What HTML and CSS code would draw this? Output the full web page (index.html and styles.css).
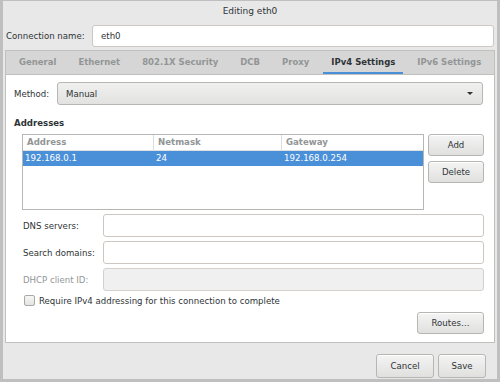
FILE: index.html
```html
<!DOCTYPE html>
<html>
<head>
<meta charset="utf-8">
<link rel="stylesheet" href="styles.css">
</head>
<body>
<div class="window">
  <div class="titlebar">Editing eth0</div>
  <div class="conn-row">
    <span class="conn-label">Connection name:</span>
    <div class="input conn-input">eth0</div>
  </div>
  <div class="notebook">
    <div class="tabs">
      <div class="tab">General</div>
      <div class="tab">Ethernet</div>
      <div class="tab">802.1X Security</div>
      <div class="tab">DCB</div>
      <div class="tab">Proxy</div>
      <div class="tab active">IPv4 Settings</div>
      <div class="tab">IPv6 Settings</div>
    </div>
    <div class="page">
      <div class="method-row">
        <span class="method-label">Method:</span>
        <div class="combo"><span>Manual</span><span class="arrow"></span></div>
      </div>
      <div class="section-title">Addresses</div>
      <div class="addr-row">
        <div class="table">
          <div class="thead">
            <div class="cell c1">Address</div>
            <div class="cell c2">Netmask</div>
            <div class="cell c3">Gateway</div>
          </div>
          <div class="trow selected">
            <div class="cell c1">192.168.0.1</div>
            <div class="cell c2">24</div>
            <div class="cell c3">192.168.0.254</div>
          </div>
        </div>
        <div class="addr-buttons">
          <div class="button">Add</div>
          <div class="button">Delete</div>
        </div>
      </div>
      <div class="fields">
        <span class="flabel">DNS servers:</span>
        <div class="input"></div>
        <span class="flabel">Search domains:</span>
        <div class="input"></div>
        <span class="flabel disabled">DHCP client ID:</span>
        <div class="input input-disabled"></div>
      </div>
      <div class="check-row">
        <span class="checkbox"></span>
        <span>Require IPv4 addressing for this connection to complete</span>
      </div>
      <div class="routes-row">
        <div class="button routes">Routes…</div>
      </div>
    </div>
  </div>
  <div class="actions">
    <div class="button act cancel">Cancel</div>
    <div class="button act save">Save</div>
  </div>
</div>
</body>
</html>
```

FILE: styles.css
```css
* { box-sizing: border-box; }
html, body { margin: 0; padding: 0; }
body {
  width: 500px;
  height: 382px;
  background: #bfbfbf;
  padding: 1px 3px 3px 3px;
  font-family: "DejaVu Sans", sans-serif;
  font-size: 8.6px;
  color: #2e3436;
}
.window {
  height: 378px;
  background: #e8e8e8;
  display: flex;
  flex-direction: column;
}
.titlebar {
  height: 20px;
  text-align: center;
  font-size: 9px;
  line-height: 20px;
  color: #2e3436;
}
.conn-row {
  display: flex;
  align-items: center;
  padding: 4px 3px 0 3px;
  height: 26px;
}
.conn-label { width: 86px; }
.input {
  height: 22px;
  background: #fff;
  border: 1px solid #cdc7c2;
  border-radius: 3px;
  display: flex;
  align-items: center;
  padding: 0 8px;
}
.conn-input { flex: 1; height: 22px; }
.notebook {
  margin: 3px 2px 0 2px;
  border: 1px solid #c0c0bd;
  display: flex;
  flex-direction: column;
  height: 293px;
}
.tabs {
  height: 24px;
  background: #d6d6d6;
  display: flex;
  padding: 0 2px;
  border-bottom: 1px solid #c0c0bd;
  overflow: hidden;
}
.tab {
  flex: none;
  white-space: nowrap;
  margin: 0 3px;
  padding: 0 8px;
  font-weight: bold;
  font-size: 8.5px;
  color: #929595;
  line-height: 23px;
  border-bottom: 2px solid transparent;
}
.tab.active {
  color: #2e3436;
  border-bottom-color: #4a90d9;
}
.page {
  flex: 1;
  background: #fff;
  padding: 7px 10px 0 8px;
  display: flex;
  flex-direction: column;
}
.method-row {
  display: flex;
  align-items: center;
  height: 23px;
  padding-right: 1px;
}
.method-label { width: 43px; }
.combo {
  flex: 1;
  height: 23px;
  border: 1px solid #b6b6b3;
  border-radius: 3px;
  background: linear-gradient(#f0f0ef, #e2e2e0);
  display: flex;
  align-items: center;
  justify-content: space-between;
  padding: 0 9px 0 8px;
}
.arrow {
  width: 0; height: 0;
  border-left: 3px solid transparent;
  border-right: 3px solid transparent;
  border-top: 3px solid #2e3436;
}
.section-title {
  font-weight: bold;
  margin-top: 13px;
  height: 16px;
  line-height: 11px;
}
.addr-row {
  display: flex;
  padding-left: 8px;
  gap: 4px;
}
.table {
  width: 404px;
  height: 76px;
  border: 1px solid #b6b6b3;
  background: #fff;
}
.thead, .trow { display: flex; height: 15px; line-height: 15px; }
.thead { color: #929595; font-weight: bold; border-bottom: 1px solid #e0e0e0; height: 16px; }
.thead .cell { border-right: 1px solid #dcdcdc; }
.thead .cell.c3 { border-right: none; }
.cell { padding-left: 4px; }
.trow .cell { padding-left: 2px; }
.c1 { width: 131px; }
.c2 { width: 128px; }
.c3 { flex: 1; }
.trow.selected { background: #4a90d9; color: #fff; }
.addr-buttons {
  display: flex;
  flex-direction: column;
  gap: 5px;
}
.button {
  height: 22px;
  border: 1px solid #b6b6b3;
  border-radius: 3px;
  background: linear-gradient(#f4f4f4, #e0e0df);
  display: flex;
  align-items: center;
  justify-content: center;
  box-shadow: inset 0 1px #fff;
}
.addr-buttons .button { width: 56px; }
.fields {
  margin-top: 4px;
  display: grid;
  grid-template-columns: 80px 1fr;
  row-gap: 4px;
  padding-left: 9px;
}
.fields .input { height: 23px; }
.flabel { display: flex; align-items: center; }
.flabel.disabled { color: #929595; }
.input-disabled { background: #f0f0f0; border-color: #d5d0cc; }
.check-row {
  display: flex;
  align-items: center;
  gap: 4px;
  margin-top: 4px;
  padding-left: 10px;
  height: 11px;
}
.checkbox {
  flex: none;
  width: 11px; height: 11px;
  border: 1px solid #a8a8a5;
  border-radius: 2px;
  background: linear-gradient(#f6f6f6, #e4e4e3);
}
.routes-row {
  display: flex;
  justify-content: flex-end;
  margin-top: 6px;
}
.routes { width: 67px; }
.actions {
  display: flex;
  justify-content: flex-end;
  gap: 4px;
  padding: 11px 11px 0 0;
}
.act { height: 24px; }
.cancel { width: 58px; }
.save { width: 48px; }
```
